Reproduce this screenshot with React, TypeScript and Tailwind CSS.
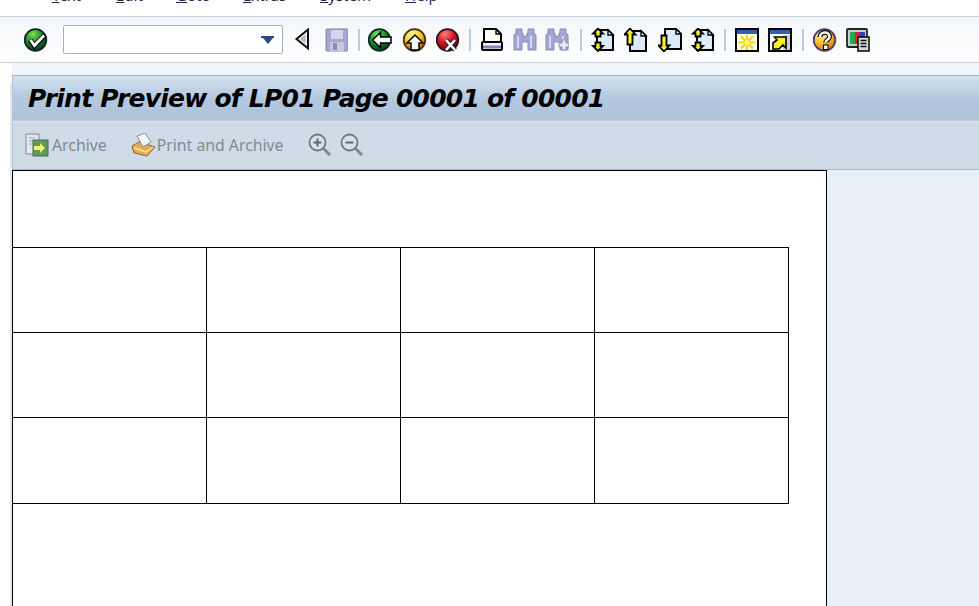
const menus = [
  { label: 'Text', cls: 'ml-[52px] w-[64px]' },
  { label: 'Edit', cls: 'w-[60px]' },
  { label: 'Goto', cls: 'w-[67px]' },
  { label: 'Extras', cls: 'w-[77px]' },
  { label: 'System', cls: 'w-[85px]' },
  { label: 'Help', cls: 'w-[40px]' },
]

function Ball({ id, top, mid, low, rim, className = '', children }: { id: string; top: string; mid: string; low: string; rim: string; className?: string; children: React.ReactNode }) {
  return (
    <svg width="24" height="24" viewBox="0 0 24 24" className={`shrink-0 ${className}`}>
      <defs>
        <radialGradient id={id} cx="38%" cy="22%" r="85%">
          <stop offset="0%" stopColor={top} />
          <stop offset="50%" stopColor={mid} />
          <stop offset="100%" stopColor={low} />
        </radialGradient>
      </defs>
      <circle cx="11.500" cy="12" r="10.800" fill={`url(#${id})`} stroke={rim} strokeWidth="1.800" />
      {children}
    </svg>
  )
}

function Sep({ className }: { className: string }) {
  return <div className={`w-[2px] h-[22px] bg-[#b9cde0] shrink-0 ${className}`} />
}

function Box({ className, children }: { className: string; children: React.ReactNode }) {
  return (
    <svg width="24" height="24" viewBox="0 0 24 24" className={`shrink-0 ${className}`}>
      {children}
    </svg>
  )
}

function Arrow({ d }: { d: string }) {
  return <path d={d} fill="#f7f02a" stroke="#000" strokeWidth="1.800" strokeLinejoin="miter" />
}

function Sheet({ x, y }: { x: number; y: number }) {
  return (
    <>
      <path d={`M${x} ${y}h11l5 5v15h-16z`} fill="#dceafa" stroke="#000" strokeWidth="2" />
      <path d={`M${x + 11} ${y}v5h5z`} fill="#fff" stroke="#000" strokeWidth="1.400" />
    </>
  )
}

function Binoculars({ plus }: { plus?: boolean }) {
  return (
    <>
      <path d="M3 1h6v4h1v3h4V5h1V1h6v4l2 2v15h-8V14h-6v8H1V7l2-2z" fill="#a3a5d2" stroke="#8b8db8" strokeWidth="1" />
      <rect x="4" y="8" width="2" height="12" fill="#d6d7ee" />
      <rect x="17" y="8" width="2" height="12" fill="#d6d7ee" />
      {plus && <path d="M14 15h3v-3h4v3h3v4h-3v3h-4v-3h-3z" fill="#e6e7f5" stroke="#8b8db8" strokeWidth="1" />}
    </>
  )
}

function WindowFrame({ children }: { children: React.ReactNode }) {
  return (
    <>
      <rect x="1" y="1" width="22" height="22" fill="#fff" />
      <rect x="2" y="2" width="20" height="4" fill="#2f5fb0" />
      {children}
      <rect x="1" y="1" width="22" height="22" fill="none" stroke="#000" strokeWidth="2" />
    </>
  )
}

export default function App() {
  return (
    <div className="w-[979px] h-[606px] overflow-hidden bg-white flex flex-col font-['Noto_Sans',sans-serif]">
      {/* menu, cut off by the top of the window */}
      <div className="h-[16px] overflow-hidden flex shrink-0">
        {menus.map(m => (
          <div key={m.label} className={`${m.cls} shrink-0 -mt-[16px] text-[15px] leading-[22px] text-[#1b2a4a]`}>
            <span className="underline">{m.label[0]}</span>
            {m.label.slice(1)}
          </div>
        ))}
      </div>

      {/* system toolbar */}
      <div className="h-[47px] shrink-0 border-y border-y-[#c6d1dd] bg-gradient-to-b from-[#f3f6fa] to-white flex items-center pl-[24px]">
        <Ball id="ok" top="#7fe04e" mid="#168a2a" low="#06301e" rim="#0f2a22">
          <path d="M6 12l4.500 6L21 7" fill="none" stroke="#0a0a0a" strokeWidth="5" />
          <path d="M6.500 12l4 5.500L20 7.500" fill="none" stroke="#fff" strokeWidth="2.800" />
        </Ball>
        <div className="ml-[15px] w-[220px] h-[29px] shrink-0 rounded-[2px] border border-[#a9adb5] bg-white flex items-center justify-end pr-[8px]">
          <div className="flex flex-col items-center">
            <div className="w-[13px] h-[2px] bg-[#2a4a80]" />
            <div className="w-0 h-0 border-x-[5px] border-x-transparent border-t-[6px] border-t-[#2a4a80]" />
          </div>
        </div>
        <Box className="ml-[7px]">
          <path d="M18 1.500L6.500 11 18 20.500z" fill="#eef1f5" stroke="#111" strokeWidth="2" />
          <path d="M15.500 6.500v9L10 11z" fill="#b4b8c0" />
        </Box>
        <Box className="ml-[10px]">
          <rect x="2" y="1" width="22" height="22" rx="1" fill="#a3a5d2" stroke="#85889f" />
          <rect x="7" y="2" width="12" height="9" fill="#d4d6ee" />
          <rect x="6" y="14" width="14" height="9" fill="#c5c7e4" />
          <rect x="9" y="15" width="4" height="7" fill="#8b8db8" />
        </Box>
        <Sep className="ml-[10px]" />
        <Ball id="back" className="ml-[8px]" top="#7fe04e" mid="#168a2a" low="#06301e" rim="#0f2a22">
          <path d="M4.500 12l8-7.500v4.500H23v6H12.500v4.500z" fill="#fff" stroke="#000" strokeWidth="1.500" />
        </Ball>
        <Ball id="up" className="ml-[11px]" top="#fff7a0" mid="#f7c81e" low="#a8480a" rim="#4b3210">
          <path d="M12 7l8 8h-4v7H8v-7H4z" fill="#fff" stroke="#000" strokeWidth="1.500" />
        </Ball>
        <Ball id="stop" className="ml-[9px]" top="#ff8080" mid="#d4101c" low="#4c0810" rim="#3a1216">
          <path d="M10 12l9 10M19 12l-9 10" stroke="#222" strokeWidth="4.800" />
          <path d="M10 12l9 10M19 12l-9 10" stroke="#fff" strokeWidth="2.600" />
        </Ball>
        <Sep className="ml-[9px]" />
        <Box className="ml-[9px]">
          <path d="M4 1h12l5 5v11H4z" fill="#fff" stroke="#000" strokeWidth="2" />
          <path d="M16 1v5h5" fill="none" stroke="#000" strokeWidth="1.400" />
          <rect x="2" y="14" width="20" height="8" rx="1" fill="#f4f6fa" stroke="#000" strokeWidth="2" />
          <rect x="3" y="17.500" width="18" height="3" fill="#7f86c0" />
        </Box>
        <Box className="ml-[9px]">
          <Binoculars />
        </Box>
        <Box className="ml-[8px]">
          <Binoculars plus />
        </Box>
        <Sep className="ml-[11px]" />
        <Box className="ml-[9px]">
          <Sheet x={6} y={2} />
          <Arrow d="M7 0.500l5 5H9.500v3h-5v-3H2z" />
          <Arrow d="M7 23l5-5H9.500v-3.500h-5V18H2z" />
        </Box>
        <Box className="ml-[9px]">
          <Sheet x={6} y={3} />
          <Arrow d="M6 0.500l5.500 6h-3v10h-5v-10h-3z" />
        </Box>
        <Box className="ml-[10px]">
          <Sheet x={7} y={1} />
          <Arrow d="M6 23.500l5.500-6h-3v-10h-5v10h-3z" />
        </Box>
        <Box className="ml-[9px]">
          <Sheet x={6} y={2} />
          <Arrow d="M7 0.500l5 5H9.500v3h-5v-3H2z" />
          <Arrow d="M7 23l5-5H9.500v-3.500h-5V18H2z" />
        </Box>
        <Sep className="ml-[9px]" />
        <Box className="ml-[9px]">
          <WindowFrame>
            <rect x="2" y="6" width="20" height="16" fill="#fffde0" />
            <path d="M12 7v15M3.500 14.500h17M6 8.500l12 12M18 8.500l-12 12" stroke="#f2d60c" strokeWidth="2.200" />
            <circle cx="12" cy="14.500" r="2.500" fill="#fff6a0" />
          </WindowFrame>
        </Box>
        <Box className="ml-[9px]">
          <WindowFrame>
            <rect x="15" y="7" width="7" height="15" fill="#c9ccd2" />
            <path d="M5 21v-6l4-3-2.500-3H18v11l-3-3-4 4z" fill="#f7f02a" stroke="#000" strokeWidth="1.600" />
          </WindowFrame>
        </Box>
        <Sep className="ml-[10px]" />
        <Ball id="help" className="ml-[9px]" top="#fff2a0" mid="#fbc02a" low="#d8620c" rim="#4a3a70">
          <path d="M7 9c0-6 9.500-6 9.500-.5 0 3.500-4 3.500-4 6" fill="none" stroke="#000" strokeWidth="4.800" />
          <path d="M7 9c0-6 9.500-6 9.500-.5 0 3.500-4 3.500-4 6" fill="none" stroke="#fff" strokeWidth="2.600" />
          <rect x="10.500" y="17" width="4.500" height="4.500" fill="#fff" stroke="#000" />
        </Ball>
        <Box className="ml-[9px]">
          <rect x="1" y="1" width="20" height="18" rx="1" fill="#c9cbd0" stroke="#222" strokeWidth="1.800" />
          <rect x="4" y="4" width="5" height="12" fill="#2da44a" />
          <rect x="9" y="4" width="5" height="12" fill="#d8222a" />
          <rect x="14" y="4" width="5" height="12" fill="#2a3fc8" />
          <rect x="12" y="9" width="11" height="14" fill="#d6d8dc" stroke="#111" strokeWidth="1.600" />
          <path d="M14.500 12.500h6M14.500 15.500h6M14.500 18.500h6" stroke="#111" strokeWidth="1.400" />
        </Box>
      </div>

      {/* main area */}
      <div className="flex-1 min-h-0 flex">
        <div className="w-[12px] shrink-0 flex justify-end">
          <div className="w-[2px] mt-[20px] bg-[#e3e7f2]" />
        </div>
        <div className="flex-1 min-w-0 flex flex-col">
          <div className="h-[12px] shrink-0 bg-[#f1f4f9]" />
          <div className="h-[46px] shrink-0 border-y border-t-[#a8b2c6] border-b-[#b8c9da] border-l border-l-[#b4c4d6] bg-gradient-to-b from-[#d3e1ef] via-[#b4c9df] to-[#aec3da] flex items-center pl-[15px]">
            <span className="font-['DejaVu_Sans',sans-serif] font-bold italic text-[25px] tracking-[-0.78px] leading-none text-black whitespace-nowrap">
              Print Preview of LP01 Page 00001 of 00001
            </span>
          </div>
          <div className="h-[49px] shrink-0 border-t border-t-[#dbe5ee] border-b border-b-[#a9b8c7] border-l border-l-[#b4c4d6] bg-[#cfdce7] flex items-center pb-[1px] text-[15.800px] text-[#7f8a95]">
            <svg width="24" height="24" viewBox="0 0 24 24" className="ml-[12px] shrink-0">
              <rect x="1" y="1" width="13" height="20" fill="#e4e8ee" stroke="#808890" />
              <path d="M4 5h6M4 8h6M4 11h6" stroke="#9aa4b4" />
              <rect x="8" y="7" width="15" height="16" fill="#5f9a5a" stroke="#4a6a50" />
              <path d="M9 13h6v-3l5 5-5 5v-3H9z" fill="#f2ee6a" />
            </svg>
            <span className="ml-[3px] mt-[2px]">Archive</span>
            <svg width="25" height="24" viewBox="0 0 25 24" className="ml-[24px] shrink-0">
              <path d="M1 13l7-4 16 5-8 9-13-3z" fill="#e6ab50" stroke="#8a6a3a" />
              <path d="M6 3l8-3 6 9-8 5z" fill="#f4f6fa" stroke="#8a8f98" />
              <path d="M3 15l12 4 7-5" fill="none" stroke="#fbe6b0" strokeWidth="1.500" />
            </svg>
            <span className="ml-[1px] mt-[2px]">Print and Archive</span>
            <svg width="24" height="24" viewBox="0 0 24 24" className="ml-[24px] shrink-0">
              <circle cx="9.500" cy="9.500" r="8" fill="#d9e2ea" stroke="#6f7a84" strokeWidth="1.800" />
              <path d="M5.500 9.500h8M9.500 5.500v8" stroke="#5e6870" strokeWidth="2" />
              <path d="M15 15l7 7" stroke="#7d8892" strokeWidth="2.800" />
            </svg>
            <svg width="24" height="24" viewBox="0 0 24 24" className="ml-[8px] shrink-0">
              <circle cx="9.500" cy="9.500" r="8" fill="#d9e2ea" stroke="#6f7a84" strokeWidth="1.800" />
              <path d="M5.500 9.500h8" stroke="#5e6870" strokeWidth="2" />
              <path d="M15 15l7 7" stroke="#7d8892" strokeWidth="2.800" />
            </svg>
          </div>
          <div className="flex-1 min-h-0 flex bg-[#e8eff7]">
            <div className="w-[815px] shrink-0 bg-white border-l border-r border-t border-black pt-[76px]">
              <div className="grid grid-cols-[194px_194px_194px_194px] grid-rows-[85px_85px_86px] w-[776px] border-t border-black">
                {Array.from({ length: 12 }).map((_, i) => (
                  <div key={i} className="border-r border-b border-black" />
                ))}
              </div>
            </div>
          </div>
        </div>
      </div>
    </div>
  )
}
